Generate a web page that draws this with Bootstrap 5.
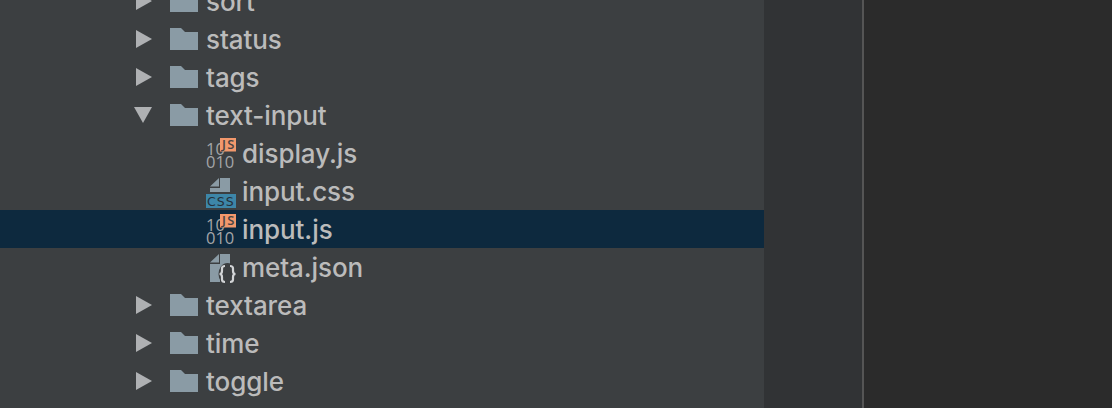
<!DOCTYPE html>
<html lang="en">
<head>
<meta charset="utf-8">
<title>Project tree</title>
<link href="https://cdn.jsdelivr.net/npm/bootstrap@5.3.0/dist/css/bootstrap.min.css" rel="stylesheet">
<style>
html,body{margin:0;height:408px;overflow:hidden;background:#2b2b2b}
.ide{height:408px;overflow:hidden}
.tree-pane{width:764px;background:#3c3f41;overflow:hidden;flex:none}
.gutter-pane{width:98px;background:#313335;flex:none}
.split-line{width:2px;background:#555;flex:none}
.editor-pane{background:#2b2b2b}
.tree-list{margin-top:-18px}
.tree-row{height:38px;color:#bbb;font:500 26px/38px "Inter","Liberation Sans",sans-serif;letter-spacing:-.08px}
.tree-row.picked{background:#0d293e}
.folder-row{padding-left:134px}
.file-row{padding-left:206px}
.twisty{width:18px;height:18px;margin-right:18px;flex:none}
.folder-ico{width:28px;height:22px;margin-right:8px;flex:none}
.file-ico{width:32px;height:38px;margin-right:4px;flex:none;overflow:visible}
.label-txt{white-space:nowrap;padding-top:2px}
.ico-txt{font-family:"Open Sans",sans-serif;letter-spacing:0}
.ico-wide{font-family:"DejaVu Sans",sans-serif;letter-spacing:1.1px}
</style>
</head>
<body>
<svg width="0" height="0" class="d-block">
<defs>
<symbol id="i-right" viewBox="0 0 18 18"><path d="M2 0 18 9 2 18Z" fill="#afb1b3"/></symbol>
<symbol id="i-down" viewBox="0 0 18 18"><path d="M0 1H18L9 17Z" fill="#afb1b3"/></symbol>
<symbol id="i-folder" viewBox="0 0 28 22"><path d="M0 0H11L15 4H28V22H0Z" fill="#8a9ba5"/></symbol>
</defs>
</svg>
<div class="ide d-flex">
<div class="tree-pane">
<div class="tree-list">
<div class="tree-row folder-row d-flex align-items-center"><svg class="twisty"><use href="#i-right"/></svg><svg class="folder-ico"><use href="#i-folder"/></svg><span class="label-txt">sort</span></div>
<div class="tree-row folder-row d-flex align-items-center"><svg class="twisty"><use href="#i-right"/></svg><svg class="folder-ico"><use href="#i-folder"/></svg><span class="label-txt">status</span></div>
<div class="tree-row folder-row d-flex align-items-center"><svg class="twisty"><use href="#i-right"/></svg><svg class="folder-ico"><use href="#i-folder"/></svg><span class="label-txt">tags</span></div>
<div class="tree-row folder-row d-flex align-items-center"><svg class="twisty"><use href="#i-down"/></svg><svg class="folder-ico"><use href="#i-folder"/></svg><span class="label-txt">text-input</span></div>
<div class="tree-row file-row d-flex align-items-center">
<svg class="file-ico" viewBox="0 0 32 38"><text class="ico-txt" x="0" y="21" font-size="16.500" font-weight="500" fill="#a4a6a8">10</text><text class="ico-txt" x="0" y="33.500" font-size="16.500" font-weight="500" fill="#a4a6a8">010</text><rect x="14" y="4" width="16" height="13.500" fill="#f2986c"/><text class="ico-txt" x="16" y="15" font-size="13" font-weight="600" style="letter-spacing:1.400px" fill="#4a4544">JS</text></svg>
<span class="label-txt">display.js</span></div>
<div class="tree-row file-row d-flex align-items-center">
<svg class="file-ico" viewBox="0 0 32 38"><path d="M4 14.500 13 6V14.500ZM14 6H24V20H4V16H14Z" fill="#8a9ba5"/><rect x="0" y="22" width="30" height="14" fill="#3d86a8"/><text class="ico-wide" x="1" y="34" font-size="12.500" fill="#25303a">CSS</text></svg>
<span class="label-txt">input.css</span></div>
<div class="tree-row file-row picked d-flex align-items-center">
<svg class="file-ico" viewBox="0 0 32 38"><text class="ico-txt" x="0" y="21" font-size="16.500" font-weight="500" fill="#a4a6a8">10</text><text class="ico-txt" x="0" y="33.500" font-size="16.500" font-weight="500" fill="#a4a6a8">010</text><rect x="14" y="4" width="16" height="13.500" fill="#f2986c"/><text class="ico-txt" x="16" y="15" font-size="13" font-weight="600" style="letter-spacing:1.400px" fill="#4a4544">JS</text></svg>
<span class="label-txt">input.js</span></div>
<div class="tree-row file-row d-flex align-items-center">
<svg class="file-ico" viewBox="0 0 32 38"><path d="M4 14.500 13 6V14.500ZM14 6H24V24H14V34H4V16H14Z" fill="#8a9ba5"/><ellipse cx="21.500" cy="26" rx="9" ry="11" fill="#3c3f41"/><path d="M19 18q-3 0-3 2.500v2.500q0 3-2.500 3 2.500 0 2.500 3v2.500q0 2.500 3 2.500M24 18q3 0 3 2.500v2.500q0 3 2.500 3-2.500 0-2.500 3v2.500q0 2.500-3 2.500" fill="none" stroke="#d2d4d6" stroke-width="2.200"/></svg>
<span class="label-txt">meta.json</span></div>
<div class="tree-row folder-row d-flex align-items-center"><svg class="twisty"><use href="#i-right"/></svg><svg class="folder-ico"><use href="#i-folder"/></svg><span class="label-txt">textarea</span></div>
<div class="tree-row folder-row d-flex align-items-center"><svg class="twisty"><use href="#i-right"/></svg><svg class="folder-ico"><use href="#i-folder"/></svg><span class="label-txt">time</span></div>
<div class="tree-row folder-row d-flex align-items-center"><svg class="twisty"><use href="#i-right"/></svg><svg class="folder-ico"><use href="#i-folder"/></svg><span class="label-txt">toggle</span></div>
</div>
</div>
<div class="gutter-pane"></div>
<div class="split-line"></div>
<div class="editor-pane flex-grow-1"></div>
</div>
<script src="https://cdn.jsdelivr.net/npm/bootstrap@5.3.0/dist/js/bootstrap.bundle.min.js"></script>
</body>
</html>
